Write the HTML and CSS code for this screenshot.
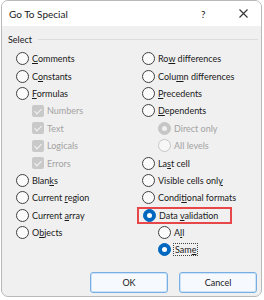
FILE: index.html
```html
<!DOCTYPE html>
<html lang="en">
<head>
    <meta charset="UTF-8">
    <meta name="viewport" content="width=device-width, initial-scale=1.0">
    <title>Go To Special</title>
    <link rel="stylesheet" href="styles.css">
</head>
<body>

    <div class="dialog">
        <div class="titlebar">
            <span class="title">Go To Special</span>
            <span class="help">?</span>
            <span class="close">
                <svg width="9" height="9" viewBox="0 0 9 9"><path d="M0.5 0.5 L8.5 8.5 M8.5 0.5 L0.5 8.5" stroke="#333" stroke-width="1.1" fill="none"/></svg>
            </span>
        </div>

        <div class="content">
            <div class="group-label">
                <span>Select</span>
                <span class="rule"></span>
            </div>

            <div class="columns">
                <div class="col col-left">
                    <div class="opt"><span class="radio"></span><span class="label"><u>C</u>omments</span></div>
                    <div class="opt"><span class="radio"></span><span class="label">C<u>o</u>nstants</span></div>
                    <div class="opt"><span class="radio"></span><span class="label"><u>F</u>ormulas</span></div>
                    <div class="opt sub disabled"><span class="check"></span><span class="label">Numbers</span></div>
                    <div class="opt sub disabled"><span class="check"></span><span class="label">Text</span></div>
                    <div class="opt sub disabled"><span class="check"></span><span class="label">Logicals</span></div>
                    <div class="opt sub disabled"><span class="check"></span><span class="label">Errors</span></div>
                    <div class="opt"><span class="radio"></span><span class="label">Blan<u>k</u>s</span></div>
                    <div class="opt"><span class="radio"></span><span class="label">Current <u>r</u>egion</span></div>
                    <div class="opt"><span class="radio"></span><span class="label">Current <u>a</u>rray</span></div>
                    <div class="opt"><span class="radio"></span><span class="label">O<u>b</u>jects</span></div>
                </div>

                <div class="col col-right">
                    <div class="opt"><span class="radio"></span><span class="label">Ro<u>w</u> differences</span></div>
                    <div class="opt"><span class="radio"></span><span class="label">Colu<u>m</u>n differences</span></div>
                    <div class="opt"><span class="radio"></span><span class="label"><u>P</u>recedents</span></div>
                    <div class="opt"><span class="radio"></span><span class="label"><u>D</u>ependents</span></div>
                    <div class="opt sub disabled"><span class="radio checked"></span><span class="label">Direct only</span></div>
                    <div class="opt sub disabled"><span class="radio"></span><span class="label">All levels</span></div>
                    <div class="opt"><span class="radio"></span><span class="label">La<u>s</u>t cell</span></div>
                    <div class="opt"><span class="radio"></span><span class="label">Visible cells onl<u>y</u></span></div>
                    <div class="opt"><span class="radio"></span><span class="label">Condi<u>t</u>ional formats</span></div>
                    <div class="opt highlight"><span class="radio checked"></span><span class="label">Data <u>v</u>alidation</span></div>
                    <div class="opt sub"><span class="radio"></span><span class="label">A<u>l</u>l</span></div>
                    <div class="opt sub"><span class="radio checked"></span><span class="label focus">Sam<u>e</u></span></div>
                </div>
            </div>

            <div class="buttons">
                <button class="btn default">OK</button>
                <button class="btn">Cancel</button>
            </div>
        </div>
    </div>

</body>
</html>
```

FILE: styles.css
```css
body {
    margin: 0;
    background-color: #ffffff;
    font-family: Lato, "Noto Sans", sans-serif;
    font-size: 9px;
    color: #1a1a1a;
}
.dialog {
    margin-left: 1px;
    width: 259px;
    height: 295px;
    border: 1px solid #b9b9b9;
    border-radius: 7px;
    overflow: hidden;
    background-color: #f0f0f0;
    display: flex;
    flex-direction: column;
}
.titlebar {
    height: 25px;
    flex-shrink: 0;
    background-color: #ffffff;
    display: flex;
    align-items: center;
    padding-left: 7px;
}
.title {
    font-size: 10px;
    flex: 1;
}
.help {
    width: 12px;
    font-size: 10px;
    margin-right: 26px;
}
.close {
    display: flex;
    margin-right: 13px;
}
.content {
    flex: 1;
    display: flex;
    flex-direction: column;
    padding: 6px 0 3px 0;
}
.group-label {
    display: flex;
    align-items: center;
    padding-left: 6px;
    padding-right: 3px;
    height: 15px;
}
.rule {
    flex: 1;
    height: 1px;
    background-color: #dcdcdc;
    margin-left: 6px;
}
.columns {
    display: flex;
    padding-left: 14px;
    padding-top: 3px;
}
.col-left {
    width: 126px;
}
.opt {
    display: flex;
    align-items: center;
    height: 17.4px;
}
.opt.sub {
    padding-left: 16px;
}
.radio {
    width: 11px;
    height: 11px;
    border: 1px solid #404040;
    border-radius: 50%;
    background-color: #fbfbfb;
    margin-right: 3px;
    position: relative;
}
.radio.checked {
    background-color: #0067c0;
    border-color: #0067c0;
}
.radio.checked::after {
    content: "";
    position: absolute;
    left: 3px;
    top: 3px;
    width: 5px;
    height: 5px;
    border-radius: 50%;
    background-color: #ffffff;
}
.check {
    width: 12px;
    height: 12px;
    border-radius: 2px;
    background-color: #c9c9c9;
    margin-right: 3px;
    position: relative;
}
.check::after {
    content: "";
    position: absolute;
    left: 4px;
    top: 2px;
    width: 3px;
    height: 6px;
    border: solid #f4f4f4;
    border-width: 0 1.3px 1.3px 0;
    transform: rotate(45deg);
}
.disabled .label {
    color: #a2a2a2;
}
.disabled .radio {
    border-color: #c6c6c6;
    background-color: #f7f7f7;
}
.disabled .radio.checked {
    background-color: #c6c6c6;
}
.disabled .radio.checked::after {
    background-color: #f0f0f0;
}
.highlight {
    margin-left: -5px;
    padding-left: 4px;
    width: 87px;
    border: 2px solid #e8474a;
    margin-top: 0.4px;
    margin-bottom: 0.4px;
    height: 12.6px;
}
.label u {
    text-decoration-thickness: 1px;
    text-underline-offset: 1px;
}
.focus {
    outline: 1px dotted #444;
    outline-offset: 0;
    padding: 0 1px;
}
.buttons {
    display: flex;
    justify-content: flex-end;
    gap: 11px;
    padding-right: 4px;
    margin-top: auto;
}
.btn {
    width: 78px;
    height: 21px;
    font-family: Lato, "Noto Sans", sans-serif;
    font-size: 9px;
    color: #1a1a1a;
    background-color: #f6f9fd;
    border: 1px solid #77aee3;
    border-radius: 3px;
    box-shadow: inset 0 0 0 1px #cfe3f7;
    padding: 0;
}
```
